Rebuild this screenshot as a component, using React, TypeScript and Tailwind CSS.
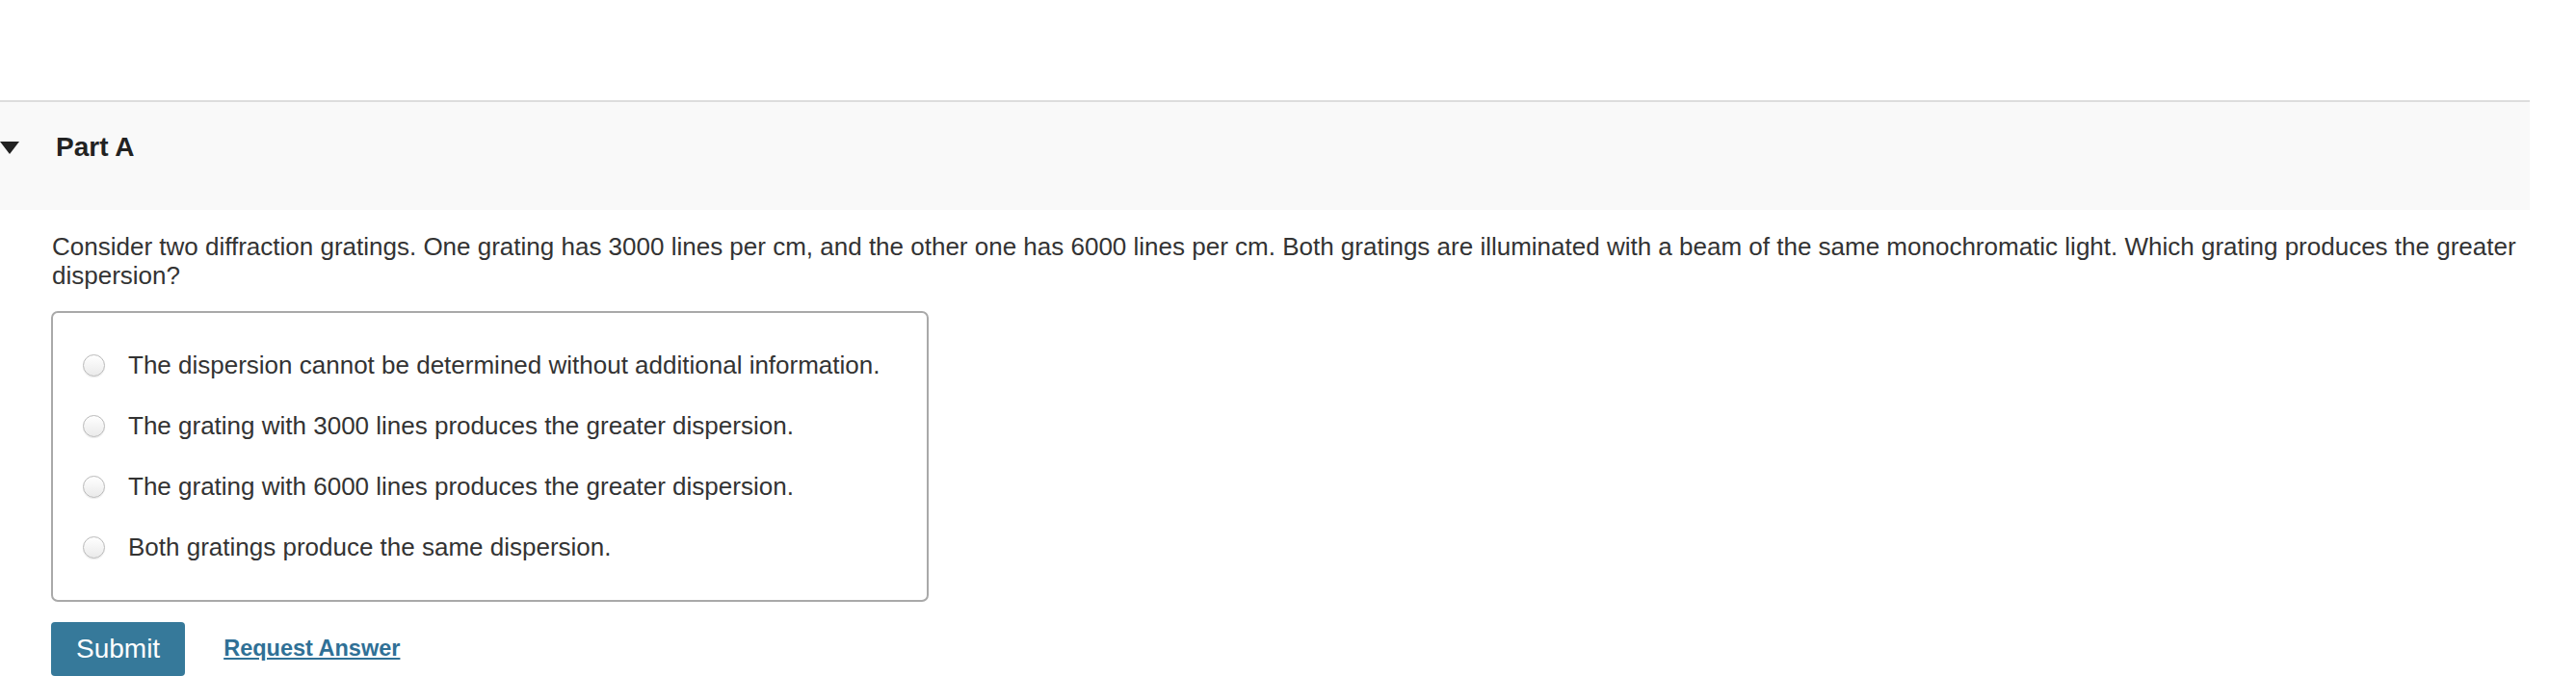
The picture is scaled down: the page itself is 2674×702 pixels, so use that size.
const options = [
  "The dispersion cannot be determined without additional information.",
  "The grating with 3000 lines produces the greater dispersion.",
  "The grating with 6000 lines produces the greater dispersion.",
  "Both gratings produce the same dispersion.",
]

function Radio() {
  return (
    <span className="w-[23px] h-[23px] shrink-0 rounded-full border border-[#b9b9b9] bg-linear-to-b from-white to-[#eaeaea] shadow-[0_1px_1px_rgba(0,0,0,0.08)]" />
  )
}

export default function App() {
  return (
    <div className="w-[2674px] h-[702px] overflow-hidden bg-white font-['Liberation_Sans',Arial,sans-serif]">
      <div className="h-[104px]" />

      {/* Part header */}
      <div className="w-[2626px] h-[114px] border-t-2 border-[#dddddd] bg-[#f9f9f9] pt-[31px]">
        <div className="flex items-center h-[32px]">
          <svg width="20" height="13" viewBox="0 0 20 13" className="shrink-0">
            <polygon points="0,0 20,0 10,13" fill="#222" />
          </svg>
          <h2 className="ml-[38px] text-[28px] font-bold text-[#222]">Part A</h2>
        </div>
      </div>

      {/* Question */}
      <div className="w-[2626px] pl-[53px] pt-[23px]">
        <p className="pl-[1px] text-[26px] leading-[30px] text-[#333]">
          Consider two diffraction gratings. One grating has 3000 lines per cm, and the other one has 6000 lines per
          cm. Both gratings are illuminated with a beam of the same monochromatic light. Which grating produces the
          greater dispersion?
        </p>

        <div className="mt-[22px] w-[911px] h-[302px] border-2 border-[#a9a9a9] rounded-[7px] pt-[23px] pl-[31px]">
          {options.map((o) => (
            <label key={o} className="h-[63px] flex items-center gap-[24px]">
              <Radio />
              <span className="text-[26px] text-[#333]">{o}</span>
            </label>
          ))}
        </div>

        <div className="mt-[21px] flex items-center">
          <button className="h-[56px] px-[26px] rounded-[4px] bg-[#36799a] text-white text-[28px]">Submit</button>
          <a className="ml-[40px] text-[23.5px] font-bold text-[#2f7096] underline">Request Answer</a>
        </div>
      </div>
    </div>
  )
}
